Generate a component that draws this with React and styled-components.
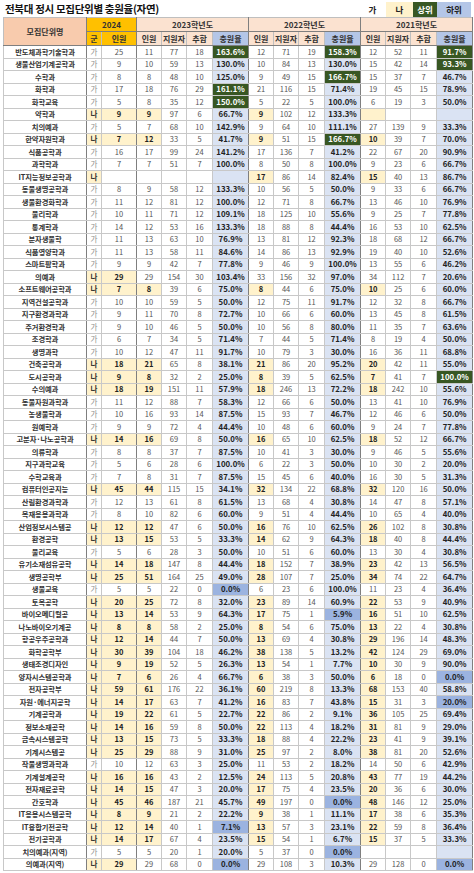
import React from "react";
import styled, {createGlobalStyle, css} from "styled-components";

const GlobalStyle = createGlobalStyle`
  html, body {
    margin: 0;
    padding: 0;
    background: #ffffff;
  }
  body {
    font-family: "Noto Sans CJK KR", "Noto Sans", sans-serif;
    color: #404040;
  }
`;

const rows = [
	["반도체과학기술학과", "가", "25", ["11", "77", "18", "^163.6%"], ["12", "71", "19", "^158.3%"], ["12", "52", "11", "^91.7%"]],
	["생물산업기계공학과", "가", "9", ["10", "59", "13", "130.0%"], ["10", "84", "13", "130.0%"], ["15", "42", "14", "^93.3%"]],
	["수학과", "가", "8", ["8", "48", "10", "125.0%"], ["9", "49", "15", "^166.7%"], ["15", "37", "7", "46.7%"]],
	["화학과", "가", "17", ["18", "76", "29", "^161.1%"], ["21", "116", "15", "71.4%"], ["19", "45", "15", "78.9%"]],
	["화학교육", "가", "5", ["8", "35", "12", "^150.0%"], ["5", "22", "5", "100.0%"], ["6", "19", "3", "50.0%"]],
	["약학과", "나", "*9", ["*9", "97", "6", "66.7%"], ["*9", "102", "12", "133.3%"], ["*", "", "", ""]],
	["치의예과", "가", "5", ["7", "68", "10", "142.9%"], ["9", "64", "10", "111.1%"], ["27", "139", "9", "33.3%"]],
	["한약자원학과", "나", "*7", ["*12", "33", "5", "41.7%"], ["*9", "51", "15", "^166.7%"], ["*10", "39", "7", "70.0%"]],
	["식품공학과", "가", "16", ["17", "99", "24", "141.2%"], ["17", "136", "7", "41.2%"], ["22", "67", "20", "90.9%"]],
	["과학학과", "가", "7", ["7", "51", "7", "100.0%"], ["8", "50", "8", "100.0%"], ["9", "23", "6", "66.7%"]],
	["IT지능정보공학과", "나", "", ["", "", "", ""], ["*17", "86", "14", "82.4%"], ["*15", "40", "13", "86.7%"]],
	["동물생명공학과", "가", "8", ["9", "58", "12", "133.3%"], ["10", "56", "5", "50.0%"], ["9", "33", "6", "66.7%"]],
	["생물환경화학과", "가", "11", ["12", "81", "12", "100.0%"], ["12", "71", "8", "66.7%"], ["13", "46", "10", "76.9%"]],
	["물리학과", "가", "10", ["11", "71", "12", "109.1%"], ["18", "125", "10", "55.6%"], ["9", "25", "7", "77.8%"]],
	["통계학과", "가", "14", ["12", "53", "16", "133.3%"], ["18", "88", "8", "44.4%"], ["16", "53", "10", "62.5%"]],
	["분자생물학", "가", "11", ["13", "63", "10", "76.9%"], ["13", "81", "12", "92.3%"], ["18", "68", "12", "66.7%"]],
	["식품영양학과", "가", "11", ["13", "58", "11", "84.6%"], ["14", "86", "13", "92.9%"], ["19", "40", "10", "52.6%"]],
	["스마트팜학과", "가", "9", ["9", "42", "7", "77.8%"], ["9", "46", "9", "100.0%"], ["13", "55", "6", "46.2%"]],
	["의예과", "나", "*29", ["29", "154", "30", "103.4%"], ["33", "156", "32", "97.0%"], ["34", "112", "7", "20.6%"]],
	["소프트웨어공학과", "나", "*7", ["*8", "39", "6", "75.0%"], ["*8", "44", "6", "75.0%"], ["*10", "25", "6", "60.0%"]],
	["지역건설공학과", "가", "10", ["10", "59", "5", "50.0%"], ["12", "75", "11", "91.7%"], ["12", "32", "8", "66.7%"]],
	["지구환경과학과", "가", "9", ["11", "70", "8", "72.7%"], ["10", "66", "6", "60.0%"], ["13", "45", "8", "61.5%"]],
	["주거환경학과", "가", "9", ["10", "46", "5", "50.0%"], ["10", "56", "8", "80.0%"], ["11", "35", "7", "63.6%"]],
	["조경학과", "가", "6", ["7", "34", "5", "71.4%"], ["7", "44", "5", "71.4%"], ["8", "19", "4", "50.0%"]],
	["생명과학", "가", "10", ["12", "47", "11", "91.7%"], ["10", "79", "3", "30.0%"], ["16", "36", "11", "68.8%"]],
	["건축공학과", "나", "*18", ["*21", "65", "8", "38.1%"], ["*21", "86", "20", "95.2%"], ["*20", "42", "11", "55.0%"]],
	["도시공학과", "나", "*9", ["*8", "32", "2", "25.0%"], ["*8", "39", "5", "62.5%"], ["*7", "41", "7", "^100.0%"]],
	["수의예과", "나", "*18", ["*19", "151", "11", "57.9%"], ["*18", "246", "13", "72.2%"], ["*18", "242", "10", "55.6%"]],
	["동물자원과학과", "가", "11", ["12", "88", "7", "58.3%"], ["12", "66", "6", "50.0%"], ["13", "41", "10", "76.9%"]],
	["농생물학과", "가", "10", ["16", "93", "14", "87.5%"], ["15", "93", "7", "46.7%"], ["12", "46", "6", "50.0%"]],
	["원예학과", "가", "9", ["9", "72", "4", "44.4%"], ["10", "48", "6", "60.0%"], ["9", "24", "7", "77.8%"]],
	["고분자·나노공학과", "나", "*14", ["*16", "69", "8", "50.0%"], ["*16", "65", "10", "62.5%"], ["*18", "52", "12", "66.7%"]],
	["의류학과", "가", "8", ["8", "37", "7", "87.5%"], ["10", "41", "3", "30.0%"], ["9", "46", "5", "55.6%"]],
	["지구과학교육", "가", "5", ["6", "28", "6", "100.0%"], ["6", "22", "3", "50.0%"], ["10", "30", "2", "20.0%"]],
	["수학교육과", "가", "7", ["8", "31", "7", "87.5%"], ["15", "45", "6", "40.0%"], ["16", "30", "5", "31.3%"]],
	["컴퓨터인공지능", "나", "*45", ["*44", "115", "15", "34.1%"], ["*32", "134", "22", "68.8%"], ["*32", "120", "16", "50.0%"]],
	["산림환경과학과", "가", "12", ["13", "61", "8", "61.5%"], ["13", "68", "4", "30.8%"], ["14", "47", "8", "57.1%"]],
	["목재응용과학과", "가", "8", ["10", "82", "6", "60.0%"], ["9", "51", "4", "44.4%"], ["10", "65", "4", "40.0%"]],
	["산업정보시스템공", "나", "*12", ["*12", "47", "6", "50.0%"], ["*16", "76", "10", "62.5%"], ["*26", "102", "8", "30.8%"]],
	["환경공학", "나", "*13", ["*15", "53", "5", "33.3%"], ["*14", "62", "9", "64.3%"], ["*18", "40", "8", "44.4%"]],
	["물리교육", "가", "5", ["6", "28", "3", "50.0%"], ["10", "51", "6", "60.0%"], ["13", "30", "4", "30.8%"]],
	["유기소재섬유공학", "나", "*14", ["*18", "147", "8", "44.4%"], ["*18", "152", "7", "38.9%"], ["*23", "42", "13", "56.5%"]],
	["생명공학부", "나", "*25", ["*51", "164", "25", "49.0%"], ["*28", "107", "7", "25.0%"], ["*34", "74", "22", "64.7%"]],
	["생물교육", "가", "5", ["5", "22", "0", "_0.0%"], ["6", "23", "6", "100.0%"], ["11", "23", "4", "36.4%"]],
	["토목공학", "나", "*20", ["*25", "72", "8", "32.0%"], ["*23", "89", "14", "60.9%"], ["*22", "53", "9", "40.9%"]],
	["바이오메디컬공", "나", "*13", ["*14", "53", "9", "64.3%"], ["*17", "75", "1", "_5.9%"], ["*16", "51", "10", "62.5%"]],
	["나노바이오기계공", "나", "*8", ["*8", "58", "2", "25.0%"], ["*8", "54", "6", "75.0%"], ["*13", "22", "4", "30.8%"]],
	["항공우주공학과", "나", "*12", ["*14", "44", "7", "50.0%"], ["*13", "69", "4", "30.8%"], ["*29", "196", "14", "48.3%"]],
	["화학공학부", "나", "*30", ["*39", "104", "18", "46.2%"], ["*38", "138", "5", "13.2%"], ["*42", "124", "29", "69.0%"]],
	["생태조경디자인", "나", "*9", ["*19", "52", "5", "26.3%"], ["*13", "54", "1", "7.7%"], ["*10", "30", "9", "90.0%"]],
	["양자시스템공학과", "나", "*7", ["*6", "26", "4", "66.7%"], ["*6", "38", "3", "50.0%"], ["*6", "18", "0", "_0.0%"]],
	["전자공학부", "나", "*59", ["*61", "176", "22", "36.1%"], ["*60", "219", "8", "13.3%"], ["*68", "153", "40", "58.8%"]],
	["자원·에너지공학", "나", "*14", ["*17", "63", "7", "41.2%"], ["*16", "83", "7", "43.8%"], ["*15", "31", "3", "_20.0%"]],
	["기계공학과", "나", "*19", ["*22", "61", "5", "22.7%"], ["*22", "86", "2", "9.1%"], ["*36", "105", "25", "69.4%"]],
	["정보소재공학", "나", "*14", ["*16", "59", "8", "50.0%"], ["*22", "113", "4", "18.2%"], ["*31", "81", "9", "29.0%"]],
	["금속시스템공학", "나", "*13", ["*15", "73", "5", "33.3%"], ["*18", "88", "4", "22.2%"], ["*23", "41", "9", "39.1%"]],
	["기계시스템공", "나", "*25", ["*29", "88", "9", "31.0%"], ["*25", "97", "2", "8.0%"], ["*38", "81", "20", "52.6%"]],
	["작물생명과학과", "가", "10", ["12", "63", "3", "25.0%"], ["11", "53", "2", "18.2%"], ["14", "50", "6", "42.9%"]],
	["기계설계공학", "나", "*16", ["*16", "43", "2", "12.5%"], ["*24", "113", "5", "20.8%"], ["*43", "77", "19", "44.2%"]],
	["전자재료공학", "나", "*14", ["*15", "47", "3", "20.0%"], ["*17", "75", "4", "23.5%"], ["*20", "36", "6", "30.0%"]],
	["간호학과", "나", "*45", ["*46", "187", "21", "45.7%"], ["*49", "197", "0", "_0.0%"], ["*48", "146", "12", "25.0%"]],
	["IT응용시스템공학", "나", "*8", ["*9", "21", "2", "22.2%"], ["*9", "38", "1", "11.1%"], ["*17", "38", "6", "35.3%"]],
	["IT융합기전공학", "나", "*12", ["*14", "40", "1", "_7.1%"], ["*13", "57", "3", "23.1%"], ["*22", "59", "8", "36.4%"]],
	["전기공학과", "나", "*14", ["*17", "67", "4", "23.5%"], ["*15", "54", "1", "6.7%"], ["*15", "37", "5", "33.3%"]],
	["치의예과(지역)", "가", "5", ["5", "20", "1", "20.0%"], ["5", "37", "0", "_0.0%"], ["", "", "", ""]],
	["의예과(지역)", "나", "*29", ["29", "68", "0", "_0.0%"], ["29", "108", "3", "10.3%"], ["29", "128", "0", "_0.0%"]],
];

const years = ["2023학년도", "2022학년도", "2021학년도"];

// "*" = 나군 강조(노랑), "^" = 상위(초록), "_" = 하위(파랑)
function parseCount(v) {
	if (v.startsWith("*")) return {text: v.slice(1), mark: true};
	return {text: v, mark: false};
}

function parseRate(v) {
	if (v.startsWith("^")) return {text: v.slice(1), tone: "top"};
	if (v.startsWith("_")) return {text: v.slice(1), tone: "low"};
	return {text: v, tone: "base"};
}

export default function App() {
	return (
		<Page>
			<GlobalStyle />
			<TitleBar>
				<Title>전북대 정시 모집단위별 충원율(자연)</Title>
				<Legend>
					<LegendItem tone="ga">가</LegendItem>
					<LegendItem tone="na">나</LegendItem>
					<LegendItem tone="top">상위</LegendItem>
					<LegendItem tone="low">하위</LegendItem>
				</Legend>
			</TitleBar>
			<Table>
				<colgroup>
					<col style={{width: 83}} />
					<col style={{width: 15}} />
					<col style={{width: 35}} />
					{years.map((y) => (
						<React.Fragment key={y}>
							<col style={{width: 25}} />
							<col style={{width: 25}} />
							<col style={{width: 26}} />
							<col style={{width: 36}} />
						</React.Fragment>
					))}
				</colgroup>
				<thead>
					<tr>
						<HeadCell rowSpan={2} tone="name" edge>
							모집단위명
						</HeadCell>
						<HeadCell colSpan={2} tone="gold" edge>
							2024
						</HeadCell>
						{years.map((y) => (
							<HeadCell key={y} colSpan={4} tone="peach" edge>
								{y}
							</HeadCell>
						))}
					</tr>
					<tr>
						<HeadCell tone="gold">군</HeadCell>
						<HeadCell tone="gold" edge>
							인원
						</HeadCell>
						{years.map((y) => (
							<React.Fragment key={y}>
								<HeadCell tone="peach">인원</HeadCell>
								<HeadCell tone="peach">지원자</HeadCell>
								<HeadCell tone="peach">추합</HeadCell>
								<HeadCell tone="blue" edge>
									충원율
								</HeadCell>
							</React.Fragment>
						))}
					</tr>
				</thead>
				<tbody>
					{rows.map(([name, gun, n24, ...groups]) => {
						const c24 = parseCount(n24);
						return (
							<Row key={name}>
								<NameCell>{name}</NameCell>
								<GunCell na={gun === "나"}>{gun}</GunCell>
								<NumCell mark={c24.mark} edge>
									{c24.text}
								</NumCell>
								{groups.map((g, i) => {
									const c = parseCount(g[0]);
									const r = parseRate(g[3]);
									return (
										<React.Fragment key={i}>
											<NumCell mark={c.mark}>{c.text}</NumCell>
											<NumCell>{g[1]}</NumCell>
											<NumCell>{g[2]}</NumCell>
											<RateCell tone={r.tone}>{r.text}</RateCell>
										</React.Fragment>
									);
								})}
							</Row>
						);
					})}
				</tbody>
			</Table>
		</Page>
	);
}

const Page = styled.div`
	width: 474px;
	padding: 0 3px;
	box-sizing: border-box;
`;

const TitleBar = styled.div`
	display: flex;
	align-items: center;
	justify-content: space-between;
	height: 17px;
	padding-top: 2px;
	box-sizing: border-box;
`;

const Title = styled.h1`
	margin: 0 0 0 2px;
	font-size: 10.5px;
	font-weight: 700;
	color: #111;
	line-height: 1;
	letter-spacing: -0.3px;
`;

const legendTones = {
	ga: css`background: #ffffff; color: #222;`,
	na: css`background: #fff2cc; color: #222;`,
	top: css`background: #385723; color: #ffffff;`,
	low: css`background: #b4c6e7; color: #222;`,
};

const Legend = styled.div`
	display: flex;
	height: 15px;
`;

const LegendItem = styled.div`
	width: ${(p) => (p.tone === "low" ? 34 : p.tone === "top" ? 24 : 27)}px;
	display: flex;
	align-items: center;
	justify-content: center;
	font-size: 8.5px;
	font-weight: 700;
	line-height: 1;
	${(p) => legendTones[p.tone]}
`;

const Table = styled.table`
	width: 468px;
	table-layout: fixed;
	border-collapse: collapse;
	border: 1px solid #7f7f7f;
	font-size: 8px;
	line-height: 10px;
`;

const headTones = {
	name: "#f8cbad",
	gold: "#ffc000",
	peach: "#fbe2d0",
	blue: "#b4c6e7",
};

const HeadCell = styled.th`
	height: 13px;
	padding: 0;
	font-size: 8px;
	font-weight: 700;
	color: #333;
	text-align: center;
	vertical-align: middle;
	white-space: nowrap;
	overflow: hidden;
	background: ${(p) => headTones[p.tone]};
	border: 1px solid #bfbfbf;
	border-bottom-color: #7f7f7f;
	${(p) => p.edge && css`border-right-color: #7f7f7f;`}
`;

const Row = styled.tr`
	height: 12.5px;
`;

const baseCell = css`
	padding: 0;
	height: 11px;
	line-height: 10px;
	text-align: center;
	vertical-align: middle;
	white-space: nowrap;
	overflow: hidden;
	border: 1px solid #c8c8c8;
`;

const NameCell = styled.td`
	${baseCell};
	font-size: 7.3px;
	font-weight: 700;
	color: #333;
	letter-spacing: -0.1px;
	border-right-color: #7f7f7f;
`;

const GunCell = styled.td`
	${baseCell};
	font-size: 7.5px;
	${(p) =>
		p.na
			? css`background: #fff2cc; color: #333; font-weight: 700;`
			: css`color: #8c8c8c; font-weight: 400;`}
`;

const NumCell = styled.td`
	${baseCell};
	font-size: 7.5px;
	color: #555;
	${(p) => p.mark && css`background: #fff2cc; color: #222; font-weight: 700;`}
	${(p) => p.edge && css`border-right-color: #7f7f7f;`}
`;

const rateTones = {
	base: css`background: #dae3f3; color: #222;`,
	top: css`background: #385723; color: #ffffff;`,
	low: css`background: #9bb3e0; color: #222;`,
};

const RateCell = styled.td`
	${baseCell};
	font-size: 7.8px;
	font-weight: 700;
	border-right-color: #7f7f7f;
	${(p) => rateTones[p.tone]}
`;
